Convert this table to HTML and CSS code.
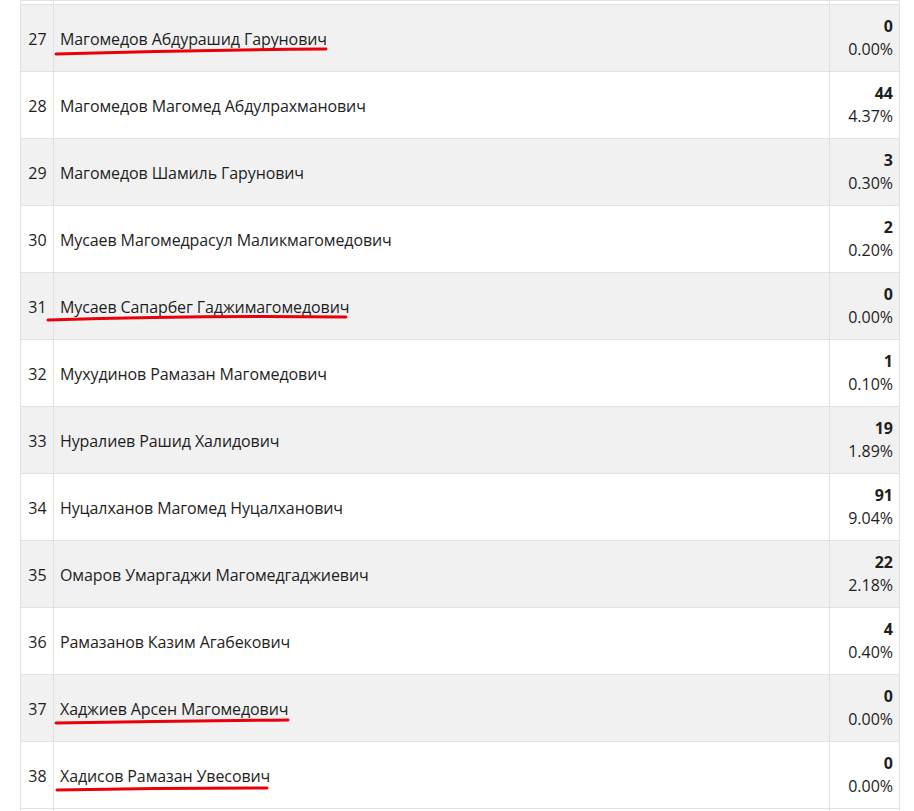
FILE: index.html
```html
<!DOCTYPE html>
<html lang="ru">
<head>
    <meta charset="UTF-8">
    <title>Результаты голосования</title>
    <link rel="stylesheet" href="styles.css">
</head>
<body>
    <div class="page">
        <table class="results">
            <tbody>
                <tr class="cut"><td></td><td></td><td></td></tr>
                <tr><td class="num">27</td><td class="name">Магомедов Абдурашид Гарунович</td><td class="votes"><b>0</b><span>0.00%</span></td></tr>
                <tr><td class="num">28</td><td class="name">Магомедов Магомед Абдулрахманович</td><td class="votes"><b>44</b><span>4.37%</span></td></tr>
                <tr><td class="num">29</td><td class="name">Магомедов Шамиль Гарунович</td><td class="votes"><b>3</b><span>0.30%</span></td></tr>
                <tr><td class="num">30</td><td class="name">Мусаев Магомедрасул Маликмагомедович</td><td class="votes"><b>2</b><span>0.20%</span></td></tr>
                <tr><td class="num">31</td><td class="name">Мусаев Сапарбег Гаджимагомедович</td><td class="votes"><b>0</b><span>0.00%</span></td></tr>
                <tr><td class="num">32</td><td class="name">Мухудинов Рамазан Магомедович</td><td class="votes"><b>1</b><span>0.10%</span></td></tr>
                <tr><td class="num">33</td><td class="name">Нуралиев Рашид Халидович</td><td class="votes"><b>19</b><span>1.89%</span></td></tr>
                <tr><td class="num">34</td><td class="name">Нуцалханов Магомед Нуцалханович</td><td class="votes"><b>91</b><span>9.04%</span></td></tr>
                <tr><td class="num">35</td><td class="name">Омаров Умаргаджи Магомедгаджиевич</td><td class="votes"><b>22</b><span>2.18%</span></td></tr>
                <tr><td class="num">36</td><td class="name">Рамазанов Казим Агабекович</td><td class="votes"><b>4</b><span>0.40%</span></td></tr>
                <tr><td class="num">37</td><td class="name">Хаджиев Арсен Магомедович</td><td class="votes"><b>0</b><span>0.00%</span></td></tr>
                <tr><td class="num">38</td><td class="name">Хадисов Рамазан Увесович</td><td class="votes"><b>0</b><span>0.00%</span></td></tr>
                <tr class="cut"><td></td><td></td><td></td></tr>
            </tbody>
        </table>
    </div>

    <!-- пометки маркером поверх таблицы -->
    <svg class="marks" width="914" height="811" viewBox="0 0 914 811">
        <path d="M56 54 Q190 50 326 49"/>
        <path d="M48 320 Q200 315 346 317"/>
        <path d="M56 723 Q170 721 288 720"/>
        <path d="M57 790 Q160 788 267 788"/>
    </svg>
</body>
</html>
```

FILE: styles.css
```css
body {
    margin: 0;
    background-color: #fff;
    color: #1e1e1e;
    font-family: "Open Sans", "Noto Sans", Arial, sans-serif;
    font-size: 16px;
}
.page {
    padding-left: 20px;
    width: 880px;
    height: 811px;
    overflow: hidden;
}
.results {
    width: 880px;
    border-collapse: collapse;
}
.results td {
    border: 1px solid #e1e1e1;
    padding: 11px 0 9px;
    vertical-align: middle;
    line-height: 23px;
}
.results tr:nth-child(even) td {
    background-color: #f1f1f1;
}
.results tr.cut td {
    height: 3px;
    padding: 0;
    line-height: 0;
    background-color: #fff;
}
.num {
    width: 31px;
    text-align: center;
    padding-left: 1px !important;
}
.name {
    padding-left: 6px !important;
    letter-spacing: -0.1px;
}
.votes {
    width: 63px;
    text-align: right;
    padding: 10px 6px 10px 0 !important;
}
.votes b,
.votes span {
    display: block;
}
.votes b {
    font-weight: 700;
}
.marks {
    position: absolute;
    left: 0;
    top: 0;
    pointer-events: none;
}
.marks path {
    fill: none;
    stroke: #e8000b;
    stroke-width: 3;
    stroke-linecap: round;
}
```
